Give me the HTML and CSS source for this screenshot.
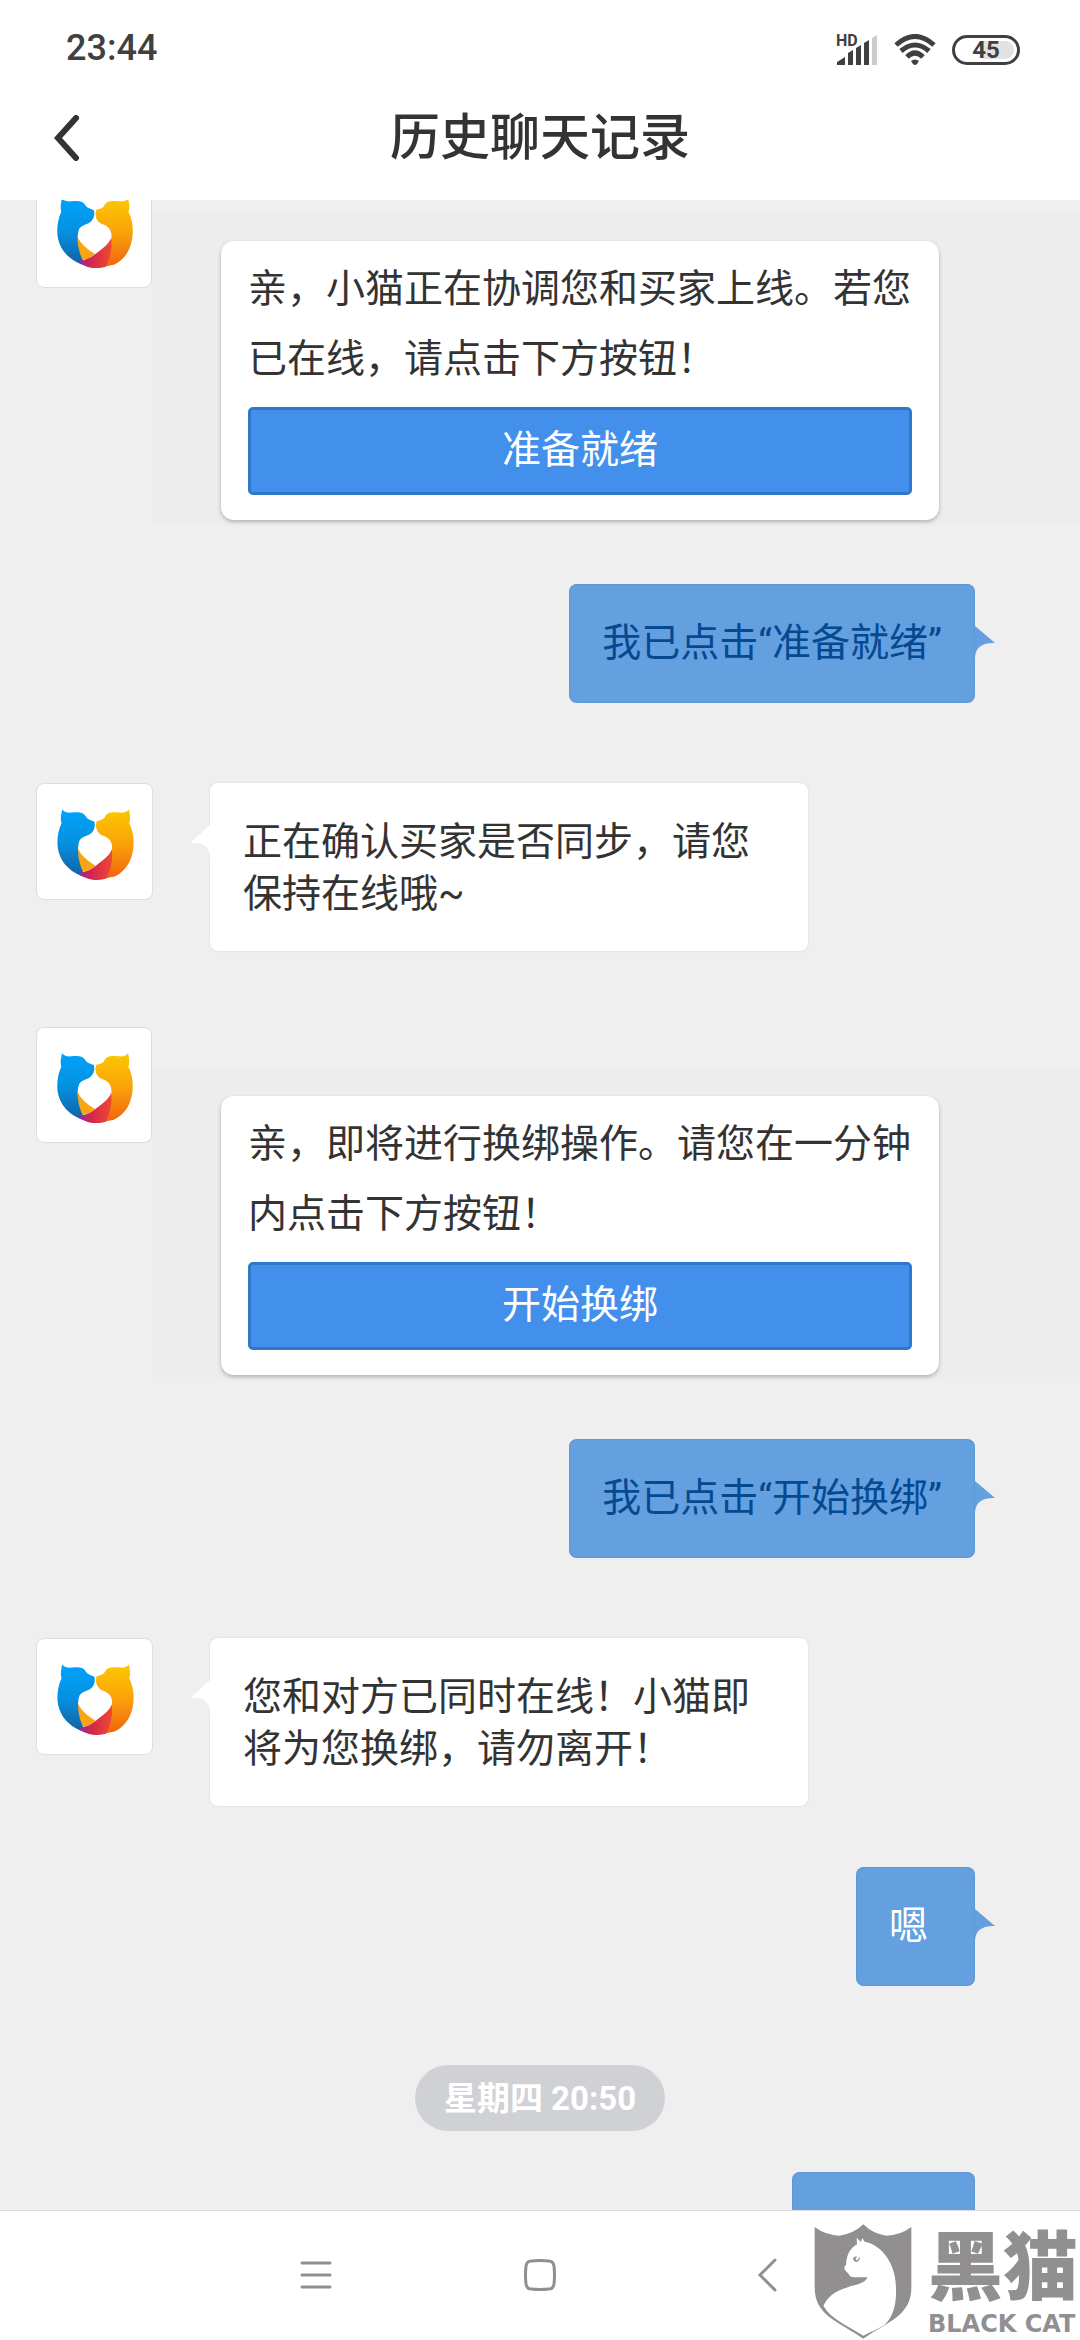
FILE: index.html
```html
<!DOCTYPE html>
<html lang="zh-CN">

<head>
  <meta charset="utf-8">
  <meta name="viewport" content="width=device-width">
  <title>历史聊天记录</title>
  <link rel="stylesheet" href="styles.css">
</head>

<body>
  <!-- shared logo, reused by every avatar -->
  <svg class="sprite" aria-hidden="true">
    <defs>
      <linearGradient id="blue" x1="0" y1="0" x2="0" y2="1">
        <stop offset="0" stop-color="#00a3fb"></stop>
        <stop offset="0.5" stop-color="#0690e0"></stop>
        <stop offset="1" stop-color="#125f9f"></stop>
      </linearGradient>
      <linearGradient id="yellow" x1="0" y1="0" x2="0" y2="1">
        <stop offset="0" stop-color="#fcc800"></stop>
        <stop offset="0.5" stop-color="#faa20a"></stop>
        <stop offset="1" stop-color="#f06410"></stop>
      </linearGradient>
      <linearGradient id="red" x1="0" y1="0" x2="1" y2="0">
        <stop offset="0" stop-color="#7a2fb4"></stop>
        <stop offset="0.35" stop-color="#d3244f"></stop>
        <stop offset="1" stop-color="#ee4a32"></stop>
      </linearGradient>
      <symbol id="logo" viewBox="8 6 338 338">
        <path fill="url(#yellow)" d="M278 81C270 90 262 91 250 90C228 87 212 90 208 102C205 109 196 112 184 115C179 126 181 143 192 152C202 160 218 160 225 176C236 200 222 225 212 237C202 252 190 268 210 283L236 278C272 262 292 224 292 178C292 158 288 138 279 121C284 108 281 96 278 81Z"></path>
        <path fill="#f9a413" d="M128 194C138 218 158 232 180 246C168 256 158 262 142 264C132 244 126 222 128 194Z"></path>
        <path fill="url(#blue)" d="M82 81C90 90 98 91 110 90C132 87 146 90 152 102C156 109 164 111 176 116C181 128 176 142 168 150C158 160 142 158 133 172C122 200 132 250 152 280C104 268 68 230 68 178C68 158 72 138 80 121C76 108 79 96 82 81Z"></path>
        <path fill="url(#red)" d="M228 198C222 216 202 230 180 247C166 258 154 264 134 266L130 271C150 283 166 288 186 288C196 288 204 286 212 284C224 262 232 230 228 198Z"></path>
      </symbol>
    </defs>
  </svg>

  <header class="header">
    <div class="status-bar">
      <time class="clock">23:44</time>
      <div class="status-icons">
        <svg class="signal" width="42" height="34" viewBox="0 -4 42 34">
          <text x="0" y="11">HD</text>
          <path d="M1 30v-3l8-5v8zM12 30V18l5-3v15zM20 30V13l5-3v20zM28 30V8l5-3v25z"></path>
          <path class="signal-off" d="M36 30V3l5-3v30z"></path>
        </svg>
        <svg class="wifi" width="42" height="31" viewBox="0 0 42 31">
          <path d="M2 11Q21 -6 40 11M7 17Q21 5 35 17M13 23Q21 15 29 23"></path>
          <path class="wifi-dot" d="M17 27Q21 24 25 27L23 30Q21 32 19 30z"></path>
        </svg>
        <span class="battery">45</span>
      </div>
    </div>
    <div class="title-bar">
      <button class="back" type="button" aria-label="返回">
        <svg width="26" height="46" viewBox="0 0 26 46"><path d="M22 3L4 23L22 43"></path></svg>
      </button>
      <h1>历史聊天记录</h1>
    </div>
  </header>

  <main class="chat">
    <div class="message card-message">
      <div class="avatar"><svg><use href="#logo"></use></svg></div>
      <div class="card-area">
        <div class="card">
          <p>亲，小猫正在协调您和买家上线。若您已在线，请点击下方按钮！</p>
          <button type="button">准备就绪</button>
        </div>
      </div>
    </div>

    <div class="message own">
      <p class="bubble action">我已点击“准备就绪”<svg class="tail" viewBox="0 0 20 34"><path d="M0 0L20 17C8 17 0 20 0 34z"></path></svg></p>
    </div>

    <div class="message">
      <div class="avatar"><svg><use href="#logo"></use></svg></div>
      <p class="bubble">正在确认买家是否同步，请您保持在线哦~<svg class="tail" viewBox="0 0 20 34"><path d="M20 0L0 18C12 17 20 20 20 34z"></path></svg></p>
    </div>

    <div class="message card-message">
      <div class="avatar"><svg><use href="#logo"></use></svg></div>
      <div class="card-area">
        <div class="card">
          <p>亲，即将进行换绑操作。请您在一分钟内点击下方按钮！</p>
          <button type="button">开始换绑</button>
        </div>
      </div>
    </div>

    <div class="message own">
      <p class="bubble action">我已点击“开始换绑”<svg class="tail" viewBox="0 0 20 34"><path d="M0 0L20 17C8 17 0 20 0 34z"></path></svg></p>
    </div>

    <div class="message">
      <div class="avatar"><svg><use href="#logo"></use></svg></div>
      <p class="bubble">您和对方已同时在线！小猫即将为您换绑，请勿离开！<svg class="tail" viewBox="0 0 20 34"><path d="M20 0L0 18C12 17 20 20 20 34z"></path></svg></p>
    </div>

    <div class="message own">
      <p class="bubble">嗯<svg class="tail" viewBox="0 0 20 34"><path d="M0 0L20 17C8 17 0 20 0 34z"></path></svg></p>
    </div>

    <time class="day">星期四 20:50</time>

    <div class="message own next">
      <p class="bubble"></p>
    </div>
  </main>

  <nav class="nav-bar">
    <button type="button" aria-label="菜单">
      <svg width="34" height="34" viewBox="0 0 34 34"><path d="M4 5H32M4 17H32M4 29H32"></path></svg>
    </button>
    <button type="button" aria-label="主页">
      <svg width="34" height="34" viewBox="0 0 34 34"><path d="M8 3Q17 2 26 3Q30 3 31 8Q32 17 31 26Q30 31 26 31Q17 32 8 31Q4 31 3 26Q2 17 3 8Q4 3 8 3z"></path></svg>
    </button>
    <button type="button" aria-label="返回">
      <svg width="34" height="34" viewBox="0 0 34 34"><path d="M27 2L12 17L27 32"></path></svg>
    </button>
  </nav>

  <div class="watermark">
    <svg width="98" height="116" viewBox="0 0 294 346">
      <path fill="#918f90" d="M2 8Q38 34 76 34Q116 30 148 0Q178 30 218 34Q256 34 292 8V190C292 274 220 292 148 343C76 292 2 274 2 190z"></path>
      <path fill="#fff" d="M128 40L141 53L145 41L152 52C206 62 246 122 246 190C248 240 238 276 212 301C190 316 166 324 148 334C102 304 50 284 28 244C48 204 84 192 132 180C148 174 158 168 160 159H120C110 158 106 154 104 149L92 136L91 128L96 121C98 92 106 74 129 60z"></path>
      <path fill="#918f90" d="M117 102Q122 94 130 97L124 103L129 109L137 97Q139 108 128 113Q119 113 117 102z"></path>
    </svg>
    <div class="watermark-text">
      <span class="watermark-cn">黑猫</span>
      <span class="watermark-en">BLACK CAT</span>
    </div>
  </div>
</body>

</html>
```
FILE: styles.css
```css
* {
  box-sizing: border-box;
}

body {
  margin: 0;
  height: 100vh;
  display: flex;
  flex-direction: column;
  overflow: hidden;
  font-family: Roboto, "Noto Sans CJK SC", sans-serif;
  font-size: 39px;
  line-height: 52px;
  color: #333;
  background-color: #efefef;
}

h1,
p {
  margin: 0;
}

button {
  font: inherit;
  padding: 0;
  border: 0;
  background: none;
}

svg {
  display: block;
}

.sprite {
  position: absolute;
  width: 0;
  height: 0;
}

/* header */
.header {
  flex: none;
  background-color: #fff;
}

.status-bar {
  display: flex;
  align-items: center;
  justify-content: space-between;
  padding: 24px 60px 4px 66px;
  line-height: 48px;
  color: #404040;
}

.clock {
  font-size: 36px;
  font-weight: 500;
}

.status-icons {
  display: flex;
  align-items: flex-end;
  gap: 16px;
}

.signal {
  fill: #404040;
  font-size: 16px;
  font-weight: 700;
}

.signal-off {
  fill: #ccc;
}

.wifi {
  fill: none;
  stroke: #404040;
  stroke-width: 5;
}

.wifi-dot {
  fill: #404040;
  stroke: none;
}

.battery {
  width: 68px;
  height: 30px;
  border: 3px solid #404040;
  border-radius: 15px;
  background: linear-gradient(90deg, #fff 45%, #e2e2e2 45%) content-box;
  padding: 3px;
  font-size: 24px;
  font-weight: 700;
  line-height: 19px;
  text-align: center;
}

.title-bar {
  display: grid;
  grid-template-columns: 1fr auto 1fr;
  align-items: center;
  height: 124px;
}

.title-bar h1 {
  font-size: 50px;
  font-weight: 500;
  line-height: 64px;
}

.back {
  justify-self: start;
  margin-left: 54px;
}

.back path {
  fill: none;
  stroke: #333;
  stroke-width: 6;
  stroke-linecap: round;
}

/* chat */
.chat {
  flex: 1;
  min-height: 0;
  overflow: hidden;
  display: flex;
  flex-direction: column;
}

.message {
  flex: none;
  display: flex;
  align-items: flex-start;
  margin-top: 80px;
  padding-left: 36px;
}

.avatar {
  flex: none;
  width: 117px;
  height: 117px;
  border: 1px solid #dedede;
  border-radius: 8px;
  background-color: #fff;
}

.avatar svg {
  width: 100%;
  height: 100%;
}

.bubble {
  position: relative;
  max-width: 598px;
  margin-left: 57px;
  padding: 33px 33px 31px;
  border-radius: 8px;
  background-color: #fff;
  box-shadow: 0 0 2px #ccc;
}

.tail {
  position: absolute;
  top: 42px;
  right: 100%;
  width: 20px;
  height: 34px;
  fill: #fff;
}

.own {
  justify-content: flex-end;
  margin-top: 61px;
  padding-right: 105px;
}

.own .bubble {
  min-width: 119px;
  padding-bottom: 34px;
  color: #fff;
  background-color: #649fe0;
  box-shadow: inset 0 0 2px #5a86b8;
}

.own .action {
  color: #054a91;
}

.own .tail {
  right: auto;
  left: 100%;
  fill: #649fe0;
}

/* system cards with a button */
.card-message {
  margin-top: 76px;
}

/* history is scrolled a little past the first message */
.card-message:first-child {
  margin-top: -28px;
}

.card-message .avatar {
  width: 116px;
  height: 116px;
}

.card-area {
  flex: 1;
  margin-top: 41px;
  padding: 28px 0 3px 69px;
  background-color: #ededed;
}

.card {
  width: 718px;
  max-width: 100%;
  padding: 13px 27px 25px;
  border-radius: 13px;
  background-color: #fff;
  box-shadow: 0 2px 4px rgba(0, 0, 0, .25);
  line-height: 70px;
}

.card button {
  display: block;
  width: 100%;
  height: 88px;
  margin-top: 13px;
  padding-bottom: 2px;
  border: 3px solid #2f78c9;
  border-radius: 5px;
  color: #fff;
  background-color: #4390ec;
}

.day {
  flex: none;
  align-self: center;
  margin-top: 79px;
  padding: 2px 29px 0;
  border-radius: 33px;
  font-size: 33px;
  font-weight: 700;
  line-height: 64px;
  color: #fff;
  background-color: #d0d1d5;
}

.next {
  margin-top: 41px;
}

.next .bubble {
  width: 183px;
  height: 119px;
}

/* bottom navigation */
.nav-bar {
  flex: none;
  display: flex;
  justify-content: center;
  height: 130px;
  border-top: 1px solid #dcdcdc;
  background-color: #fff;
}

.nav-bar button {
  display: flex;
  align-items: center;
  justify-content: center;
  width: 225px;
  padding-bottom: 2px;
}

.nav-bar path {
  fill: none;
  stroke: #8f8f8f;
  stroke-width: 3;
  stroke-linecap: round;
}

.watermark {
  position: absolute;
  right: 2px;
  bottom: 0;
  display: flex;
  align-items: flex-end;
  gap: 16px;
  color: #918f90;
}

.watermark-text {
  display: flex;
  flex-direction: column;
  font-weight: 900;
}

.watermark-cn {
  font-size: 75px;
  line-height: 80px;
}

.watermark-en {
  font-family: "DejaVu Sans", sans-serif;
  font-size: 24px;
  line-height: 32px;
}
```
